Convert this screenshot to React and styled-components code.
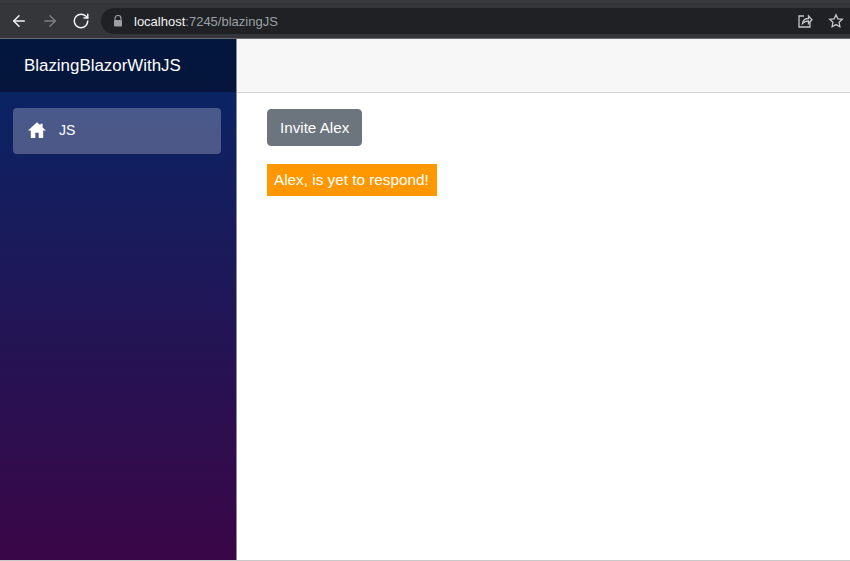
import styled, { createGlobalStyle } from "styled-components";
import { ArrowLeft, ArrowRight, RotateCw } from "lucide-react";

const GlobalStyle = createGlobalStyle`
  html, body, #root {
    margin: 0;
    height: 100%;
  }
  body {
    font-family: "Liberation Sans", Arial, sans-serif;
    background: #fff;
    overflow: hidden;
  }
`;

const Page = styled.div`
  height: 561px;
  display: flex;
  flex-direction: column;
  border-bottom: 1px solid #c9c9c9;
  box-sizing: border-box;
`;

const BrowserBar = styled.div`
  height: 39px;
  flex-shrink: 0;
  box-sizing: border-box;
  display: flex;
  align-items: center;
  padding: 1px 0 0 10px;
  background: #35363a;
  border-top: 3px solid #383a3d;
  border-bottom: 1px solid #6a6b6e;
`;

const NavButton = styled.div`
  width: 18px;
  height: 18px;
  margin-right: 13px;
  display: flex;
  color: ${(props) => (props.$disabled ? "#7d7f82" : "#f1f3f4")};
`;

const AddressBar = styled.div`
  flex: 1;
  height: 26px;
  margin-left: -2px;
  padding: 0 6px 0 12px;
  border-radius: 13px 0 0 13px;
  background: #202124;
  display: flex;
  align-items: center;
  font-size: 13px;
`;

const UrlHost = styled.span`
  color: #f1f3f4;
  margin-left: 11px;
`;

const UrlPath = styled.span`
  color: #9aa0a6;
  flex: 1;
`;

const AddressIcon = styled.svg`
  width: 16px;
  height: 16px;
  margin-left: 15px;
  fill: none;
  stroke: #c4c7c9;
  stroke-width: 1.3;
`;

const Shell = styled.div`
  flex: 1;
  display: flex;
  min-height: 0;
`;

const Sidebar = styled.aside`
  width: 237px;
  flex-shrink: 0;
  box-sizing: border-box;
  border-right: 1px solid #8b8b92;
  background-image: linear-gradient(180deg, #052767 0%, #3a0647 100%);
  display: flex;
  flex-direction: column;
`;

const Brand = styled.div`
  height: 53px;
  flex-shrink: 0;
  box-sizing: border-box;
  padding-left: 24px;
  display: flex;
  align-items: center;
  background: rgba(0, 0, 0, 0.4);
  color: #fff;
  font-size: 16.9px;
`;

const NavList = styled.nav`
  padding: 16px 15px 0 13px;
`;

const NavItem = styled.div`
  height: 46px;
  box-sizing: border-box;
  padding: 0 0 2px 15px;
  display: flex;
  align-items: center;
  gap: 13px;
  border-radius: 4px;
  background: rgba(255, 255, 255, 0.25);
  color: #fff;
  font-size: 14px;
`;

const HomeIcon = styled.svg`
  width: 18px;
  height: 18px;
  fill: #fff;
`;

const Main = styled.main`
  flex: 1;
  display: flex;
  flex-direction: column;
  min-width: 0;
`;

const TopRow = styled.div`
  height: 54px;
  flex-shrink: 0;
  box-sizing: border-box;
  background: #f7f7f7;
  border-bottom: 1px solid #d6d5d5;
`;

const Content = styled.div`
  padding: 16px 0 0 30px;
  display: flex;
  flex-direction: column;
  align-items: flex-start;
  gap: 18px;
`;

const InviteButton = styled.button`
  height: 37px;
  padding: 0 12px;
  border: 1px solid #6c757d;
  border-radius: 4px;
  background: #6c757d;
  color: #fff;
  font-family: inherit;
  font-size: 15.2px;
`;

const Status = styled.div`
  height: 32px;
  padding: 0 8px 0 7px;
  display: flex;
  align-items: center;
  background: #ff9800;
  color: #fff;
  font-size: 15.3px;
`;

export default function App() {
  return (
    <>
      <GlobalStyle />
      <Page>
        <BrowserBar>
          <NavButton>
            <ArrowLeft size={18} strokeWidth={2} />
          </NavButton>
          <NavButton $disabled>
            <ArrowRight size={18} strokeWidth={2} />
          </NavButton>
          <NavButton>
            <RotateCw size={18} strokeWidth={2} />
          </NavButton>
          <AddressBar>
            <svg width="10" height="12" viewBox="0 0 10 12">
              <path d="M2 5V3.500a3 3 0 0 1 6 0V5" fill="none" stroke="#9aa0a6" strokeWidth="1.2" />
              <rect x="1" y="5" width="8" height="6.500" rx="1" fill="#9aa0a6" />
            </svg>
            <UrlHost>localhost</UrlHost>
            <UrlPath>:7245/blazingJS</UrlPath>
            <AddressIcon viewBox="0 0 16 16">
              <path d="M7 3H2v11h11V9.500" />
              <path d="M5.500 10.500c.4-3.200 2.700-5 6-5V3l3.500 3.800-3.500 3.700V8c-2.500 0-4.500.800-6 2.500z" />
            </AddressIcon>
            <AddressIcon viewBox="0 0 16 16">
              <path d="M8 1.800l1.900 4 4.400.500-3.200 3 .8 4.400L8 11.600l-3.900 2.100.8-4.400-3.200-3 4.400-.500z" />
            </AddressIcon>
          </AddressBar>
        </BrowserBar>
        <Shell>
          <Sidebar>
            <Brand>BlazingBlazorWithJS</Brand>
            <NavList>
              <NavItem>
                <HomeIcon viewBox="0 0 16 16">
                  <path d="M8 1L0 8.500h2.500V15h4v-4.500h3V15h4V8.500H16l-3-2.800V2.500h-2v1.300z" />
                </HomeIcon>
                JS
              </NavItem>
            </NavList>
          </Sidebar>
          <Main>
            <TopRow />
            <Content>
              <InviteButton>Invite Alex</InviteButton>
              <Status>Alex, is yet to respond!</Status>
            </Content>
          </Main>
        </Shell>
      </Page>
    </>
  );
}
